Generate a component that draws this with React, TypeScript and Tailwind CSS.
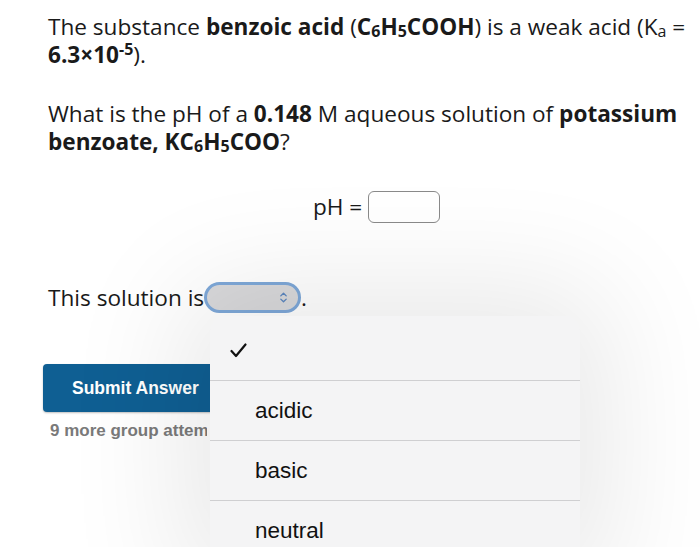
import { ChevronsUpDown } from "lucide-react";

const openSans = { fontFamily: '"Open Sans", sans-serif' };
const helv = { fontFamily: '"Liberation Sans", Arial, sans-serif' };

function Sub({ children }: { children: React.ReactNode }) {
  return <sub className="relative top-[2px] text-[16px] leading-none">{children}</sub>;
}

export default function App() {
  return (
    <div className="relative h-[547px] w-[700px] overflow-hidden bg-white text-[#1a1a1a]">
      <div className="px-[48px] pt-[13px] text-[22.6px] leading-[28px]" style={openSans}>
        <p className="whitespace-nowrap">
          The substance <b>benzoic acid</b> (<b>C<Sub>6</Sub>H<Sub>5</Sub>COOH</b>) is a weak acid (K<Sub>a</Sub> =
          <br />
          <b>
            6.3×10<sup className="text-[16px] leading-none">-5</sup>
          </b>
          ).
        </p>
        <p className="mt-[31px] whitespace-nowrap">
          What is the pH of a <b>0.148</b> M aqueous solution of <b>potassium</b>
          <br />
          <b>
            benzoate, KC<Sub>6</Sub>H<Sub>5</Sub>COO
          </b>
          ?
        </p>

        <div className="ml-[265px] mt-[35px] flex items-center gap-[6px]">
          <span>pH =</span>
          <div className="h-[32px] w-[72px] rounded-[6px] border border-[#8a8a8a] bg-white" />
        </div>

        <div className="mt-[59px] flex items-center">
          <span>This solution is</span>
          <div className="flex h-[31px] w-[97px] items-center justify-end rounded-full border-[3px] border-[#7ea8d8] bg-[#d9d9db] pr-[8px]">
            <ChevronsUpDown className="h-[13px] w-[13px] text-[#5b86bf]" strokeWidth={2.5} />
          </div>
          <span>.</span>
        </div>
      </div>

      <div className="mt-[51px] pl-[43px]" style={helv}>
        <button className="h-[48px] w-[200px] rounded-[4px] bg-[#0f5f93] pl-[29px] text-left text-[17.5px] font-bold text-white shadow-[0_1px_2px_rgba(0,0,0,0.25)]">
          Submit Answer
        </button>
        <p className="mt-[6px] w-[164px] overflow-hidden whitespace-nowrap pl-[7px] text-[17px] font-bold text-[#7a7a7a]">
          9 more group attempts remaining
        </p>
      </div>

      <div
        className="absolute left-[210px] top-[316px] w-[370px] rounded-t-[15px] bg-[#f4f4f5] shadow-[0_0_120px_30px_rgba(0,0,0,0.09)]"
        style={helv}
      >
        <div className="flex h-[64px] items-center pl-[20px] pt-[4px]">
          <svg width="17" height="15" viewBox="0 0 17 15" fill="none">
            <path d="M1.5 8 L6 13 L15.5 1.5" stroke="#111" strokeWidth="2.2" strokeLinecap="round" strokeLinejoin="round" />
          </svg>
        </div>
        {["acidic", "basic", "neutral"].map((t) => (
          <div key={t} className="flex h-[60px] items-center border-t border-[#cfcfd1] pl-[45px] text-[22.5px] text-[#111]">
            {t}
          </div>
        ))}
      </div>
    </div>
  );
}
